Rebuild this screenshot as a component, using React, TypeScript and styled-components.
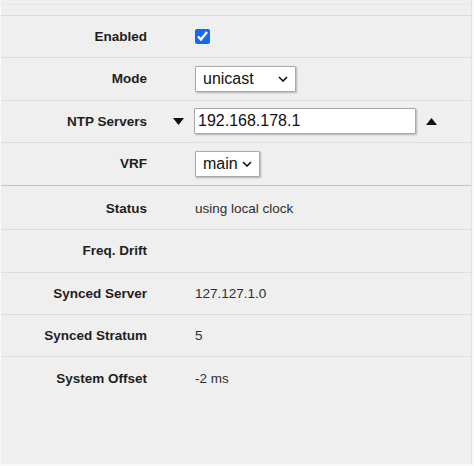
import React from 'react'
import styled, { createGlobalStyle } from 'styled-components'

const GlobalStyle = createGlobalStyle`
  html, body {
    margin: 0;
    padding: 0;
    background: #f8f8f8;
    font-family: "Liberation Sans", Arial, sans-serif;
  }
`

const Panel = styled.div`
  box-sizing: border-box;
  margin: 0 2px 0 1px;
  height: 464px;
  background: #efefef;
  border-right: 1px solid #e2e2e2;
`

const TopBand = styled.div`
  box-sizing: border-box;
  height: 16px;
  padding-top: 4px;
  border-bottom: 1px solid #dcdcdc;

  &::before {
    content: '';
    display: block;
    height: 1px;
    background: #e6e6e6;
  }
`

const Section = styled.div<{ $divider?: boolean }>`
  border-top: ${({ $divider }) => ($divider ? '1px solid #c4c4c4' : 'none')};
  padding-top: ${({ $divider }) => ($divider ? '2px' : '0')};
`

const Row = styled.div<{ $last?: boolean }>`
  box-sizing: border-box;
  display: grid;
  grid-template-columns: 146px 47px 1fr;
  align-items: center;
  height: 42.25px;
  border-bottom: ${({ $last }) => ($last ? 'none' : '1px solid #dedede')};
`

const Label = styled.div`
  text-align: right;
  font-weight: bold;
  font-size: 13.5px;
  color: #1e1e1e;
`

const Handle = styled.div`
  display: flex;
  justify-content: flex-end;
  padding-right: 10px;
`

const Field = styled.div`
  display: flex;
  align-items: center;
  gap: 10px;
`

const Value = styled.span`
  font-size: 13.5px;
  color: #2e2e2e;
  padding-left: 1px;
`

const Check = styled.input`
  width: 15px;
  height: 15px;
  margin: 0 0 0 1px;
  accent-color: #1469ee;
`

const Select = styled.select<{ $width: number }>`
  appearance: none;
  box-sizing: border-box;
  width: ${({ $width }) => $width}px;
  height: 26px;
  margin-left: 1px;
  padding: 0 0 0 7px;
  font-family: "Liberation Sans", Arial, sans-serif;
  font-size: 16px;
  color: #111;
  background-color: #fff;
  background-image: url("data:image/svg+xml,%3Csvg xmlns='http://www.w3.org/2000/svg' width='10' height='6' viewBox='0 0 10 6'%3E%3Cpath d='M1 1l4 4 4-4' fill='none' stroke='%23111' stroke-width='1.6'/%3E%3C/svg%3E");
  background-repeat: no-repeat;
  background-position: right 7px center;
  border: 1px solid #a9a9a9;
  border-radius: 1px;
  box-shadow: 1px 1px 2px rgba(0, 0, 0, 0.25);
`

const TextInput = styled.input`
  box-sizing: border-box;
  width: 222px;
  height: 26px;
  padding: 0 3px;
  font-family: "Liberation Sans", Arial, sans-serif;
  font-size: 16px;
  color: #111;
  background: #fff;
  border: 1px solid #a9a9a9;
  border-radius: 1px;
  box-shadow: 1px 1px 2px rgba(0, 0, 0, 0.25);
  outline: none;
`

const Arrow = ({ up }: { up?: boolean }) => (
  <svg width="11" height="7" viewBox="0 0 11 7">
    <path d={up ? 'M0 7L5.5 0L11 7Z' : 'M0 0L5.5 7L11 0Z'} fill="#111" />
  </svg>
)

const status = [
  { label: 'Status', value: 'using local clock' },
  { label: 'Freq. Drift', value: '' },
  { label: 'Synced Server', value: '127.127.1.0' },
  { label: 'Synced Stratum', value: '5' },
  { label: 'System Offset', value: '-2 ms' },
]

const App = () => (
  <>
    <GlobalStyle />
    <Panel>
      <TopBand />
      <Section>
        <Row>
          <Label>Enabled</Label>
          <span />
          <Field>
            <Check type="checkbox" defaultChecked />
          </Field>
        </Row>
        <Row>
          <Label>Mode</Label>
          <span />
          <Field>
            <Select $width={101} defaultValue="unicast">
              <option value="unicast">unicast</option>
              <option value="broadcast">broadcast</option>
              <option value="multicast">multicast</option>
            </Select>
          </Field>
        </Row>
        <Row>
          <Label>NTP Servers</Label>
          <Handle>
            <Arrow />
          </Handle>
          <Field>
            <TextInput defaultValue="192.168.178.1" />
            <Arrow up />
          </Field>
        </Row>
        <Row $last>
          <Label>VRF</Label>
          <span />
          <Field>
            <Select $width={65} defaultValue="main">
              <option value="main">main</option>
            </Select>
          </Field>
        </Row>
      </Section>
      <Section $divider>
        {status.map((s, i) => (
          <Row key={s.label} $last={i === status.length - 1}>
            <Label>{s.label}</Label>
            <span />
            <Field>
              <Value>{s.value}</Value>
            </Field>
          </Row>
        ))}
      </Section>
    </Panel>
  </>
)

export default App
